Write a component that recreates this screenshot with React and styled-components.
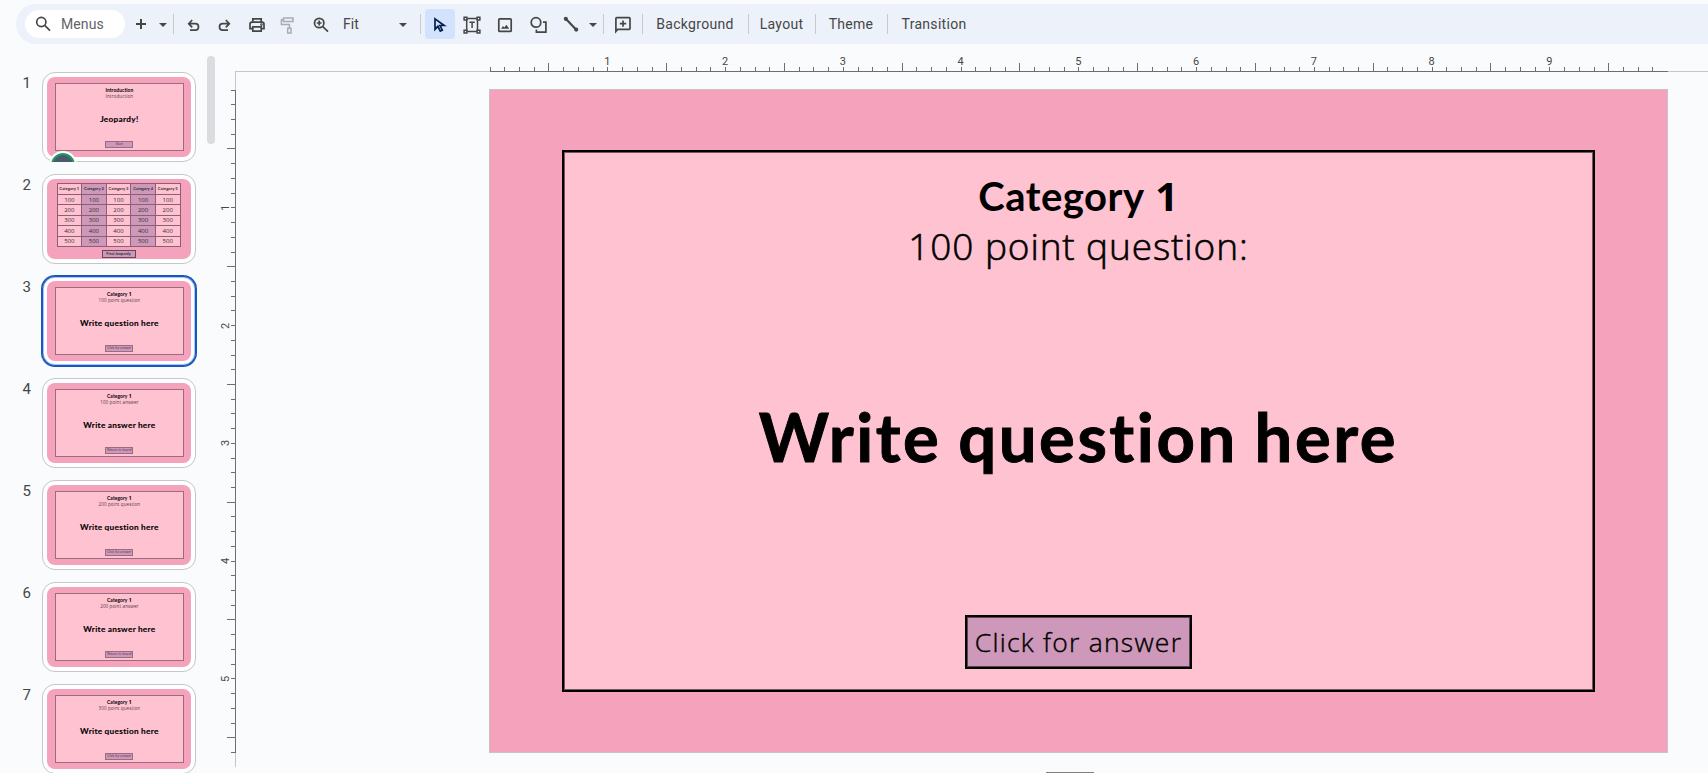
import React from 'react'
import styled, { createGlobalStyle, css } from 'styled-components'

const GlobalStyle = createGlobalStyle`
    * {
        box-sizing: border-box;
    }
    body {
        margin: 0;
        background-color: #f9fbfd;
        font-family: Roboto, "Liberation Sans", sans-serif;
    }
`

const INCH = 117.75

const slides = [
    { title: 'Introduction', subtitle: 'Introduction', heading: 'Jeopardy!', action: 'Start', collaborator: true },
    { board: true },
    { title: 'Category', number: 1, subtitle: '100 point question', heading: 'Write question here', action: 'Click for answer', selected: true },
    { title: 'Category', number: 1, subtitle: '100 point answer', heading: 'Write answer here', action: 'Return to board' },
    { title: 'Category', number: 1, subtitle: '200 point question', heading: 'Write question here', action: 'Click for answer' },
    { title: 'Category', number: 1, subtitle: '200 point answer', heading: 'Write answer here', action: 'Return to board' },
    { title: 'Category', number: 1, subtitle: '300 point question', heading: 'Write question here', action: 'Click for answer' },
]

const points = [100, 200, 300, 400, 500]
const categories = [1, 2, 3, 4, 5]

const Icon = ({ children, color = '#444746', width = 1.7 }) => (
    <svg width="20" height="20" viewBox="0 0 20 20" fill="none" stroke={color} strokeWidth={width}>
        {children}
    </svg>
)

const Caret = () => (
    <svg width="8" height="4" viewBox="0 0 8 4">
        <path d="M0 0H8L4 4Z" fill="#444746" />
    </svg>
)

const Toolbar = () => (
    <Bar>
        <Search>
            <Icon>
                <circle cx="7.3" cy="8" r="4.6" />
                <path d="M10.7 11.3L16 16.6" />
            </Icon>
            <SearchLabel>Menus</SearchLabel>
        </Search>
        <Tool $gap={1}>
            <Icon width={2}><path d="M10 5V15M5 10H15" /></Icon>
        </Tool>
        <Drop><Caret /></Drop>
        <Separator $gap={3} />
        <Tool $gap={5}>
            <Icon>
                <path d="M8.2 6L4.7 9.7L8.2 13.4M4.7 9.7H11.3A3.2 3.2 0 0 1 11.3 16.1H6" />
            </Icon>
        </Tool>
        <Tool $gap={1}>
            <Icon>
                <path d="M10.8 6L14.3 9.7L10.8 13.4M14.3 9.7H7.7A3.2 3.2 0 0 0 7.7 16.1H13" />
            </Icon>
        </Tool>
        <Tool $gap={2}>
            <Icon>
                <path d="M5.6 14.6H3V10.2A2 2 0 0 1 5 8.2H15A2 2 0 0 1 17 10.2V14.6H14.4" />
                <path d="M5.8 8V4.8H14.2V8M5.8 12.8H14.2V17.2H5.8Z" />
                <circle cx="14.5" cy="10.6" r=".5" />
            </Icon>
        </Tool>
        <Tool $gap={1}>
            <Icon color="#a9acb0" width={1.5}>
                <path d="M5.5 4H15V7.6H5.5ZM5.5 5.8H3.4V10.4H11.4V14M9.7 14.2H13V19H9.7Z" />
            </Icon>
        </Tool>
        <Tool $gap={3}>
            <Icon>
                <circle cx="8.2" cy="9" r="4.7" />
                <path d="M11.8 12.6L17 17.6M8.2 6.6V11.4M5.8 9H10.6" />
            </Icon>
        </Tool>
        <Zoom>Fit</Zoom>
        <Drop><Caret /></Drop>
        <Separator $gap={10} />
        <Tool $gap={4} $active>
            <Icon color="#041e49">
                <path d="M5 4.8V15.4L7.9 12.3L10.3 17.2L12.3 16.2L10 11.5H14.2Z" />
            </Icon>
        </Tool>
        <Tool $gap={2}>
            <Icon width={1.5}>
                <path d="M4.7 4.6V17.2M15.5 4.6V17.2M3.8 4.5H16M3.8 17.5H16" />
                <path d="M7.4 8.2H12.8M10.1 8.2V14" />
                <path d="M2.1 3.2H4.9V6H2.1ZM15.1 3.2H17.9V6H15.1ZM2.1 16.2H4.9V19H2.1ZM15.1 16.2H17.9V19H15.1Z" fill="#edf2fa" />
            </Icon>
        </Tool>
        <Tool $gap={3}>
            <Icon>
                <rect x="3.8" y="4.8" width="12.4" height="12.6" rx="1" />
                <path d="M6 14.8L8 12L9.3 13.6L11.4 10.8L14.2 14.8Z" fill="#444746" stroke="none" />
            </Icon>
        </Tool>
        <Tool $gap={4}>
            <Icon>
                <circle cx="7" cy="8.4" r="4.8" />
                <path d="M14 8.2H16.9V18.1H7.4V15.4" />
            </Icon>
        </Tool>
        <Tool $gap={2}>
            <Icon width={2.2}>
                <path d="M5 5L15 15.4" />
                <circle cx="4.8" cy="4.8" r="1" />
                <circle cx="15.2" cy="15.6" r="1" />
            </Icon>
        </Tool>
        <Drop><Caret /></Drop>
        <Separator $gap={3} />
        <Tool $gap={4}>
            <Icon>
                <path d="M2.9 17.4V4.5A.8 .8 0 0 1 3.7 3.7H16.2A.8 .8 0 0 1 17 4.5V14.6A.8 .8 0 0 1 16.2 15.4H4.6Z" />
                <path d="M10 6.4V12.8M6.8 9.6H13.2" />
            </Icon>
        </Tool>
        <Separator $gap={4} />
        <TextTool $width={105}>Background</TextTool>
        <Separator />
        <TextTool $width={66}>Layout</TextTool>
        <Separator />
        <TextTool $width={71}>Theme</TextTool>
        <Separator />
        <TextTool $width={93}>Transition</TextTool>
    </Bar>
)

const Board = () => (
    <BoardPage>
        <Table>
            {categories.map(c => <HeadCell key={c} $tinted={c % 2 === 0}>Category {c}</HeadCell>)}
            {points.map(p => categories.map(c => (
                <Cell key={`${p}-${c}`} $tinted={c % 2 === 0}>{p}</Cell>
            )))}
        </Table>
        <BoardButton>Final Jeopardy</BoardButton>
    </BoardPage>
)

const Slide = ({ slide, unit, small }) => (
    <Page $unit={unit} $small={small}>
        <Frame $small={small}>
            <Title>{slide.title}{slide.number && <Digit> {slide.number}</Digit>}</Title>
            <Subtitle $small={small}>{slide.subtitle}</Subtitle>
            <Heading>{slide.heading}</Heading>
            <Action $small={small}><ActionText $small={small}>{slide.action}</ActionText></Action>
        </Frame>
    </Page>
)

const Filmstrip = () => (
    <Strip>
        <Thumbs>
            {slides.map((slide, i) => (
                <Row key={i}>
                    <Number>{i + 1}</Number>
                    <Thumb $selected={slide.selected}>
                        <ThumbClip>
                            {slide.board ? <Board /> : <Slide slide={slide} unit={0.1231} small />}
                        </ThumbClip>
                        {slide.collaborator && <AvatarClip><Avatar /></AvatarClip>}
                    </Thumb>
                </Row>
            ))}
        </Thumbs>
        <Scrollbar />
    </Strip>
)

const Ticks = ({ count, vertical }) => (
    <TickLine $vertical={vertical}>
        {Array.from({ length: count }, (_, i) => (
            <TickCell key={i} $vertical={vertical}>
                <Tick $vertical={vertical} $long={i % 8 === 4} />
            </TickCell>
        ))}
    </TickLine>
)

const App = () => (
    <Screen>
        <GlobalStyle />
        <Toolbar />
        <Body>
            <Filmstrip />
            <Side>
                <SideLabels>
                    {[1, 2, 3, 4, 5].map(n => <SideLabel key={n}><span>{n}</span></SideLabel>)}
                </SideLabels>
                <SideScale>
                    <Ticks count={46} vertical />
                </SideScale>
            </Side>
            <Workspace>
                <Top>
                    <TopLabels>
                        {[1, 2, 3, 4, 5, 6, 7, 8, 9].map(n => <TopLabel key={n}>{n}</TopLabel>)}
                    </TopLabels>
                    <Ticks count={80} />
                </Top>
                <Canvas>
                    <Slide slide={{ ...slides[2], subtitle: '100 point question:' }} unit={1} />
                </Canvas>
                <NotesHandle />
            </Workspace>
        </Body>
    </Screen>
)

export default App

const Screen = styled.div`
    display: flex;
    flex-direction: column;
    height: 773px;
    overflow: hidden;
    color: #444746;
`

const Bar = styled.div`
    display: flex;
    align-items: center;
    flex: none;
    height: 40px;
    margin: 4px 0 0 16px;
    padding-left: 9px;
    border-radius: 20px 0 0 20px;
    background-color: #edf1fa;
    font-size: 14px;
`

const Search = styled.div`
    display: flex;
    align-items: center;
    width: 100px;
    height: 28px;
    padding-left: 9px;
    border-radius: 14px;
    background-color: #fff;
`

const SearchLabel = styled.span`
    margin: -1px 0 0 7px;
    color: #5f6368;
    letter-spacing: .1px;
`

const Tool = styled.div`
    display: grid;
    place-items: center;
    width: 30px;
    height: 30px;
    margin-left: ${({ $gap }) => $gap}px;
    border-radius: 4px;
    ${({ $active }) => $active && css`
        background-color: #d3e3fd;
    `}
`

const Drop = styled.div`
    display: grid;
    place-items: center;
    width: 14px;
    height: 30px;
    padding-top: 2px;
`

const Separator = styled.div`
    width: 1px;
    height: 20px;
    margin-left: ${({ $gap = 0 }) => $gap}px;
    background-color: #c7c9cc;
`

const Zoom = styled.div`
    width: 53px;
    margin-left: 7px;
`

const TextTool = styled.div`
    width: ${({ $width }) => $width}px;
    padding-right: 1px;
    text-align: center;
    letter-spacing: .3px;
`

const Body = styled.div`
    display: flex;
    flex: 1;
    min-height: 0;
`

const Strip = styled.div`
    display: flex;
    flex: none;
    width: 219px;
`

const Thumbs = styled.div`
    display: flex;
    flex-direction: column;
    gap: 12px;
    width: 207px;
    padding: 28px 0 0 20px;
`

const Row = styled.div`
    display: flex;
    flex: none;
    height: 90px;
`

const Number = styled.div`
    width: 11px;
    margin: 1px 11px 0 0;
    font-size: 15px;
    line-height: 20px;
    text-align: right;
`

const Thumb = styled.div`
    position: relative;
    width: 154px;
    height: 90px;
    padding: 4px;
    border: 1px solid #c4c7c5;
    border-radius: 13px;
    background-color: #fff;
    ${({ $selected }) => $selected && css`
        border-color: #1a57ba;
        box-shadow: 0 0 0 1px #1a57ba, inset 0 0 0 1px #a8c7fa;
    `}
`

const ThumbClip = styled.div`
    width: 144px;
    height: 80px;
    overflow: hidden;
    border-radius: 8px;
`

const AvatarClip = styled.div`
    position: absolute;
    left: 6px;
    bottom: -1px;
    width: 28px;
    height: 11px;
    overflow: hidden;
`

const Avatar = styled.div`
    width: 24px;
    height: 24px;
    margin: 2px;
    border: 2px solid #1f9a63;
    border-radius: 50%;
    box-shadow: 0 0 0 2px #fff;
    background-color: #4a5a6a;
`

const Scrollbar = styled.div`
    width: 8px;
    height: 88px;
    margin-top: 12px;
    border-radius: 4px;
    background-color: #dadce0;
`

// every slide length is in em, so one unit prop scales the whole page
const Page = styled.div`
    width: 1177em;
    height: 662em;
    padding: ${({ $small }) => $small ? '52em 0 0 72em' : '60em 0 0 72em'};
    overflow: hidden;
    background-color: #f5a2bc;
    color: #000;
    font-family: Lato, "Open Sans", sans-serif;
    font-size: ${({ $unit }) => $unit}px;
    white-space: nowrap;
`

const outline = ({ $small }) => $small ? css`
    border: 1px solid #9a6c7c;
` : css`
    border: 2px solid #000;
    box-shadow: inset 0 0 0 1px rgba(0, 0, 0, .55);
`

const Frame = styled.div`
    display: flex;
    flex-direction: column;
    align-items: center;
    width: ${({ $small }) => $small ? '1048em' : '1033em'};
    height: ${({ $small }) => $small ? '550em' : '542em'};
    margin-left: ${({ $small }) => $small ? '-8em' : '0'};
    background-color: #ffc2d1;
    ${outline}
`

const Title = styled.div`
    flex: none;
    height: 1.25em;
    margin-top: .47em;
    font-size: 40em;
    font-weight: 700;
    line-height: 1.25;
    letter-spacing: .012em;
`

const Digit = styled.span`
    font-family: "Open Sans", sans-serif;
    line-height: 1;
`

const Subtitle = styled(Title)`
    height: 1.35em;
    margin-top: 0;
    color: ${({ $small }) => $small ? '#553a44' : '#000'};
    font-family: "Open Sans", sans-serif;
    font-size: 37em;
    font-weight: ${({ $small }) => $small ? 400 : 300};
    line-height: 1.37;
    letter-spacing: .024em;
    -webkit-text-stroke: ${({ $small }) => $small ? '0' : '.6px'} #000;
`

const Heading = styled(Title)`
    height: 1.35em;
    margin-top: 1.8em;
    font-size: 67em;
    line-height: 1.35;
    letter-spacing: .038em;
    word-spacing: -.03em;
    -webkit-text-stroke: .014em #000;
`

const Action = styled.div`
    display: grid;
    place-items: center;
    flex: none;
    width: 227em;
    height: 54em;
    margin-top: 133em;
    background-color: #cd98b9;
    ${outline}
`

const ActionText = styled.div`
    color: ${({ $small }) => $small ? '#4c3048' : '#000'};
    font-family: "Open Sans", sans-serif;
    font-size: 26.5em;
    font-weight: ${({ $small }) => $small ? 400 : 300};
    line-height: 1;
    letter-spacing: ${({ $small }) => $small ? '0' : '.047em'};
    -webkit-text-stroke: ${({ $small }) => $small ? '0' : '.4px'} #000;
`

const BoardPage = styled.div`
    display: flex;
    flex-direction: column;
    align-items: center;
    height: 100%;
    padding: 3px 1px 0 0;
    background-color: #f5a2bc;
    color: #333;
    font-family: Lato, "Open Sans", sans-serif;
`

const Table = styled.div`
    display: grid;
    flex: none;
    grid-template-columns: repeat(5, 1fr);
    grid-template-rows: 11px repeat(5, 10.4px);
    width: 124px;
    margin-top: 1px;
    border: solid #8d5f72;
    border-width: 1px 0 0 1px;
`

const Cell = styled.div`
    display: grid;
    place-items: center;
    border: solid #8d5f72;
    border-width: 0 1px 1px 0;
    background-color: ${({ $tinted }) => $tinted ? '#cd98b9' : '#ffc2d1'};
    font-family: "Open Sans", sans-serif;
    font-size: 6px;
    line-height: 1;
`

const HeadCell = styled(Cell)`
    font-family: Lato, sans-serif;
    font-size: 4.1px;
    font-weight: 700;
    white-space: nowrap;
`

const BoardButton = styled.div`
    display: grid;
    place-items: center;
    flex: none;
    width: 34px;
    height: 8px;
    margin-top: 3px;
    border: 1px solid #66465a;
    background-color: #cd98b9;
    font-size: 3.8px;
    font-weight: 700;
    line-height: 1;
    white-space: nowrap;
`

const Side = styled.div`
    display: flex;
    flex: none;
    width: 17px;
    height: 696px;
    margin-top: 27px;
`

const SideLabels = styled.div`
    width: 8px;
    flex: none;
    margin-top: 78px;
    font-size: 11px;
`

const SideLabel = styled.div`
    display: grid;
    place-items: center;
    width: 14px;
    height: ${INCH}px;
    line-height: 12px;
    > span {
        transform: rotate(-90deg);
    }
`

const SideScale = styled.div`
    flex: none;
    width: 9px;
    padding-top: 18.6px;
    background: linear-gradient(#c4c7c5, #c4c7c5) right / 1px 100% no-repeat;
`

const Workspace = styled.div`
    display: flex;
    flex-direction: column;
    flex: 1;
    min-width: 0;
    margin-left: -1px;
`

const Top = styled.div`
    display: flex;
    flex-direction: column;
    justify-content: flex-end;
    flex: none;
    height: 28px;
    padding-left: 254.6px;
    background: linear-gradient(#c4c7c5, #c4c7c5) bottom / 100% 1px no-repeat;
`

const TopLabels = styled.div`
    display: flex;
    margin: 0 0 -5px ${INCH / 2}px;
    font-size: 11px;
    line-height: 13px;
`

const TopLabel = styled.div`
    flex: none;
    width: ${INCH}px;
    text-align: center;
`

const TickLine = styled.div`
    display: flex;
    flex-direction: ${({ $vertical }) => $vertical ? 'column' : 'row'};
    ${({ $vertical }) => $vertical ? css`
        height: 663px;
        border-right: 1px solid #6c6f70;
    ` : css`
        width: 1178px;
        border-bottom: 1px solid #6c6f70;
    `}
`

const TickCell = styled.div`
    display: flex;
    flex: none;
    ${({ $vertical }) => $vertical ? css`
        height: ${INCH / 8}px;
        justify-content: flex-end;
    ` : css`
        width: ${INCH / 8}px;
        height: 8px;
        align-items: flex-end;
    `}
`

const Tick = styled.div`
    background-color: #6c6f70;
    ${({ $vertical, $long }) => $vertical ? css`
        width: ${$long ? 8 : 4}px;
        height: 1px;
    ` : css`
        width: 1px;
        height: ${$long ? 8 : 4}px;
    `}
`

const Canvas = styled.div`
    flex: none;
    width: 1179px;
    height: 664px;
    margin: 17px 0 0 254px;
    border: 1px solid #c9c0c8;
`

const NotesHandle = styled.div`
    width: 48px;
    height: 1px;
    margin: 19px 0 0 811px;
    background-color: #808080;
`
